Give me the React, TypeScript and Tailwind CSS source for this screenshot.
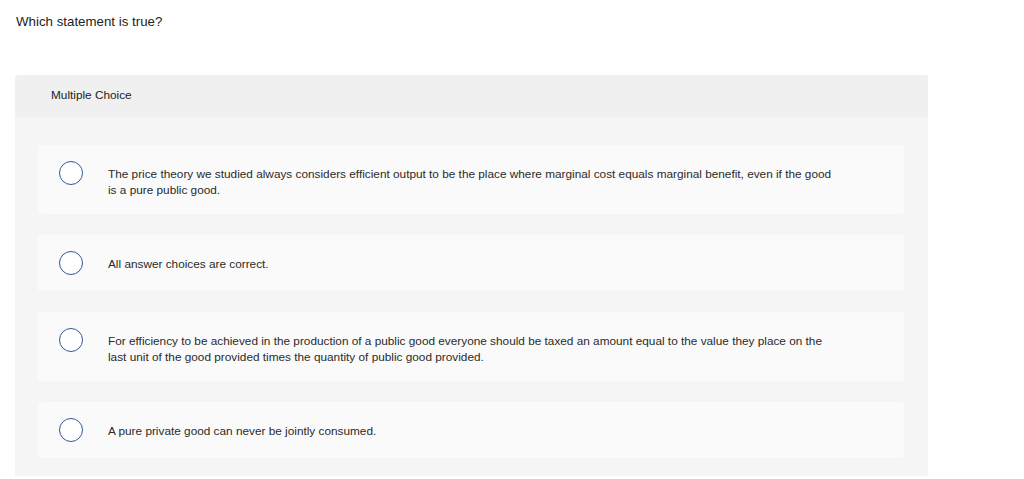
const choices = [
  "The price theory we studied always considers efficient output to be the place where marginal cost equals marginal benefit, even if the good is a pure public good.",
  "All answer choices are correct.",
  "For efficiency to be achieved in the production of a public good everyone should be taxed an amount equal to the value they place on the last unit of the good provided times the quantity of public good provided.",
  "A pure private good can never be jointly consumed.",
];

export default function App() {
  return (
    <div className="min-h-[479px] bg-white font-['Liberation_Sans',Arial,sans-serif] text-[#222]">
      <p className="px-4 pt-[13px] text-[13.3px] leading-[18px]">Which statement is true?</p>

      <div className="ml-[15px] mt-[44px] w-[913px] overflow-hidden rounded-t-[3px] bg-[#f5f5f5]">
        <div className="flex h-[42px] items-center bg-[#f0f0f0] pl-[36px] text-[11.8px]">
          Multiple Choice
        </div>

        <ul className="flex flex-col gap-[21px] pb-[18px] pl-[23px] pr-[24px] pt-[28px]">
          {choices.map((text) => (
            <li
              key={text}
              className="flex items-start rounded-[3px] bg-[#fafafa] py-4 pl-[21px] pr-[66px]"
            >
              <span className="h-6 w-6 shrink-0 rounded-full border border-[#2f5a96] bg-white" aria-hidden />
              <span className="ml-[25px] pt-[5px] text-[11.8px] leading-[16px] text-[#2a2a2a]">{text}</span>
            </li>
          ))}
        </ul>
      </div>
    </div>
  );
}
